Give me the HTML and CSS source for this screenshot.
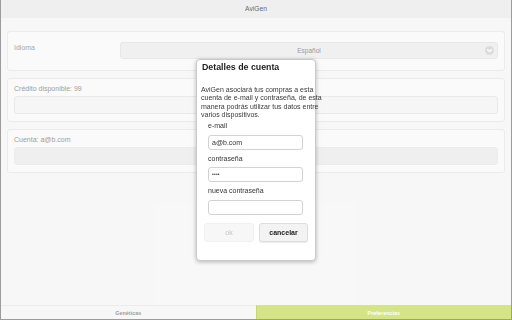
FILE: index.html
```html
<!DOCTYPE html>
<html lang="es">
<head>
<meta charset="utf-8">
<title>AviGen</title>
<link rel="stylesheet" href="styles.css">
</head>
<body>
<div class="app">
  <header class="topbar">AviGen</header>
  <main class="content">
    <section class="card card-row">
      <span class="row-label">Idioma</span>
      <div class="select">
        <span>Español</span>
        <svg class="select-icon" width="9" height="9" viewBox="0 0 9 9"><circle cx="4.5" cy="4.5" r="4.5" fill="#dcdcdc"/><path d="M2.6 3.8 L4.5 5.6 L6.4 3.8" fill="none" stroke="#fff" stroke-width="1.3" stroke-linecap="round" stroke-linejoin="round"/></svg>
      </div>
    </section>
    <section class="card card-stack">
      <span class="stack-label">Crédito disponible: 99</span>
      <div class="field-box light"></div>
    </section>
    <section class="card card-stack">
      <span class="stack-label">Cuenta: a@b.com</span>
      <div class="field-box dark"></div>
    </section>
    <div class="ghost-panel"></div>
  </main>
  <nav class="tabs">
    <div class="tab">Genéticas</div>
    <div class="tab active">Preferencias</div>
  </nav>
</div>

<div class="overlay">
  <div class="dialog">
    <h2 class="dialog-title">Detalles de cuenta</h2>
    <p class="dialog-text">AviGen asociará tus compras a esta<br>cuenta de e-mail y contraseña, de esta<br>manera podrás utilizar tus datos entre<br>varios dispositivos.</p>
    <div class="fields">
      <label class="f-label">e-mail</label>
      <div class="f-input">a@b.com</div>
      <label class="f-label">contraseña</label>
      <div class="f-input pw">••••</div>
      <label class="f-label">nueva contraseña</label>
      <div class="f-input"></div>
    </div>
    <div class="actions">
      <button class="btn btn-ok">ok</button>
      <button class="btn btn-cancel">cancelar</button>
    </div>
  </div>
</div>
</body>
</html>
```

FILE: styles.css
```css
* { box-sizing: border-box; }
html, body {
  margin: 0;
  padding: 0;
  width: 512px;
  height: 320px;
  overflow: hidden;
  font-family: "Liberation Sans", Arial, sans-serif;
}
.app {
  width: 512px;
  height: 320px;
  display: flex;
  flex-direction: column;
  background: #f7f7f7;
  border-left: 1px solid #9c9c9c;
  border-right: 1px solid #9c9c9c;
  border-bottom: 1px solid #9c9c9c;
}
.topbar {
  height: 18px;
  flex: 0 0 18px;
  background: #efefef;
  color: #6a6a6a;
  font-size: 6.7px;
  line-height: 17px;
  text-align: center;
}
.content {
  flex: 1;
  display: flex;
  flex-direction: column;
  padding: 13px 6px 0 6px;
  min-height: 0;
}
.card {
  background: #fafafa;
  border: 1px solid #ebebeb;
  border-radius: 3px;
}
.card + .card { margin-top: 7px; }
.card-row {
  height: 40px;
  display: flex;
  align-items: flex-start;
  padding: 10px 6px 0 6px;
}
.row-label {
  flex: 0 0 106px;
  font-size: 7px;
  line-height: 12px;
  color: #a8a8a8;
}
.select {
  flex: 1;
  height: 17px;
  background: #f0f0f0;
  border: 1px solid #e8e8e8;
  border-radius: 3px;
  display: flex;
  align-items: center;
  justify-content: center;
  position: relative;
  font-size: 6.5px;
  color: #9a9a9a;
}
.select-icon {
  position: absolute;
  right: 3px;
  top: 3px;
}
.card-stack {
  display: flex;
  flex-direction: column;
  padding: 4px 6px 7px 6px;
}
.stack-label {
  font-size: 7px;
  line-height: 11px;
  color: #a0a0a0;
  margin-bottom: 2px;
}
.field-box {
  height: 18px;
  border-radius: 3px;
}
.field-box.light {
  background: #f6f6f6;
  border: 1px solid #e9e9e9;
}
.field-box.dark {
  background: #efefef;
  border: 1px solid #ececec;
}
.ghost-panel {
  flex: 1;
  width: 203px;
  margin: 29px 0 0 146px;
  background: #f8f8f8;
}
.tabs {
  flex: 0 0 14px;
  height: 14px;
  display: flex;
}
.tab {
  flex: 1;
  display: flex;
  align-items: center;
  justify-content: center;
  font-size: 5.4px;
  font-weight: bold;
  color: #9d9d9d;
  background: #f7f7f7;
  border-top: 1px solid #ececec;
}
.tab.active {
  background: #d4e487;
  color: #ffffff;
  border-top: 1px solid #d4e487;
  border-left: 1px solid #c6d67a;
}

.overlay {
  position: fixed;
  inset: 0;
  display: flex;
  align-items: center;
  justify-content: center;
}
.dialog {
  width: 120px;
  height: 202px;
  background: #ffffff;
  border: 1px solid #c9c9c9;
  border-radius: 4px;
  box-shadow: 0 1px 4px rgba(0,0,0,0.28);
  padding: 2px 5px 0 5px;
  display: flex;
  flex-direction: column;
}
.dialog-title {
  margin: 0;
  font-size: 8.8px;
  line-height: 11px;
  font-weight: bold;
  color: #1e1e1e;
  white-space: nowrap;
}
.dialog-text {
  margin: 12.75px 0 0 -1px;
  font-size: 7px;
  line-height: 8.5px;
  color: #3a3a3a;
  white-space: nowrap;
}
.fields {
  margin: 1.25px 0 0 6px;
  width: 95px;
  display: flex;
  flex-direction: column;
}
.f-label {
  font-size: 7px;
  line-height: 10px;
  color: #333333;
  margin-bottom: 3.5px;
}
.f-input {
  height: 15px;
  border: 1px solid #d2d2d2;
  border-radius: 3px;
  background: #fff;
  font-size: 7px;
  line-height: 13px;
  padding-left: 3px;
  color: #333;
  margin-bottom: 4px;
}
.f-input.pw {
  font-size: 5px;
  letter-spacing: 0.2px;
}
.actions {
  margin: 4.5px 0 0 2px;
  display: flex;
  gap: 5px;
}
.btn {
  height: 19px;
  border-radius: 3px;
  font-family: "Liberation Sans", Arial, sans-serif;
  font-size: 7px;
  padding: 0;
}
.btn-ok {
  width: 50px;
  background: #f7f7f7;
  border: 1px solid #f1f1f1;
  color: #c4c4c4;
}
.btn-cancel {
  width: 49px;
  background: #f3f3f3;
  border: 1px solid #dedede;
  color: #222;
  font-weight: bold;
  box-shadow: 0 1px 1px rgba(0,0,0,0.08);
}
```
